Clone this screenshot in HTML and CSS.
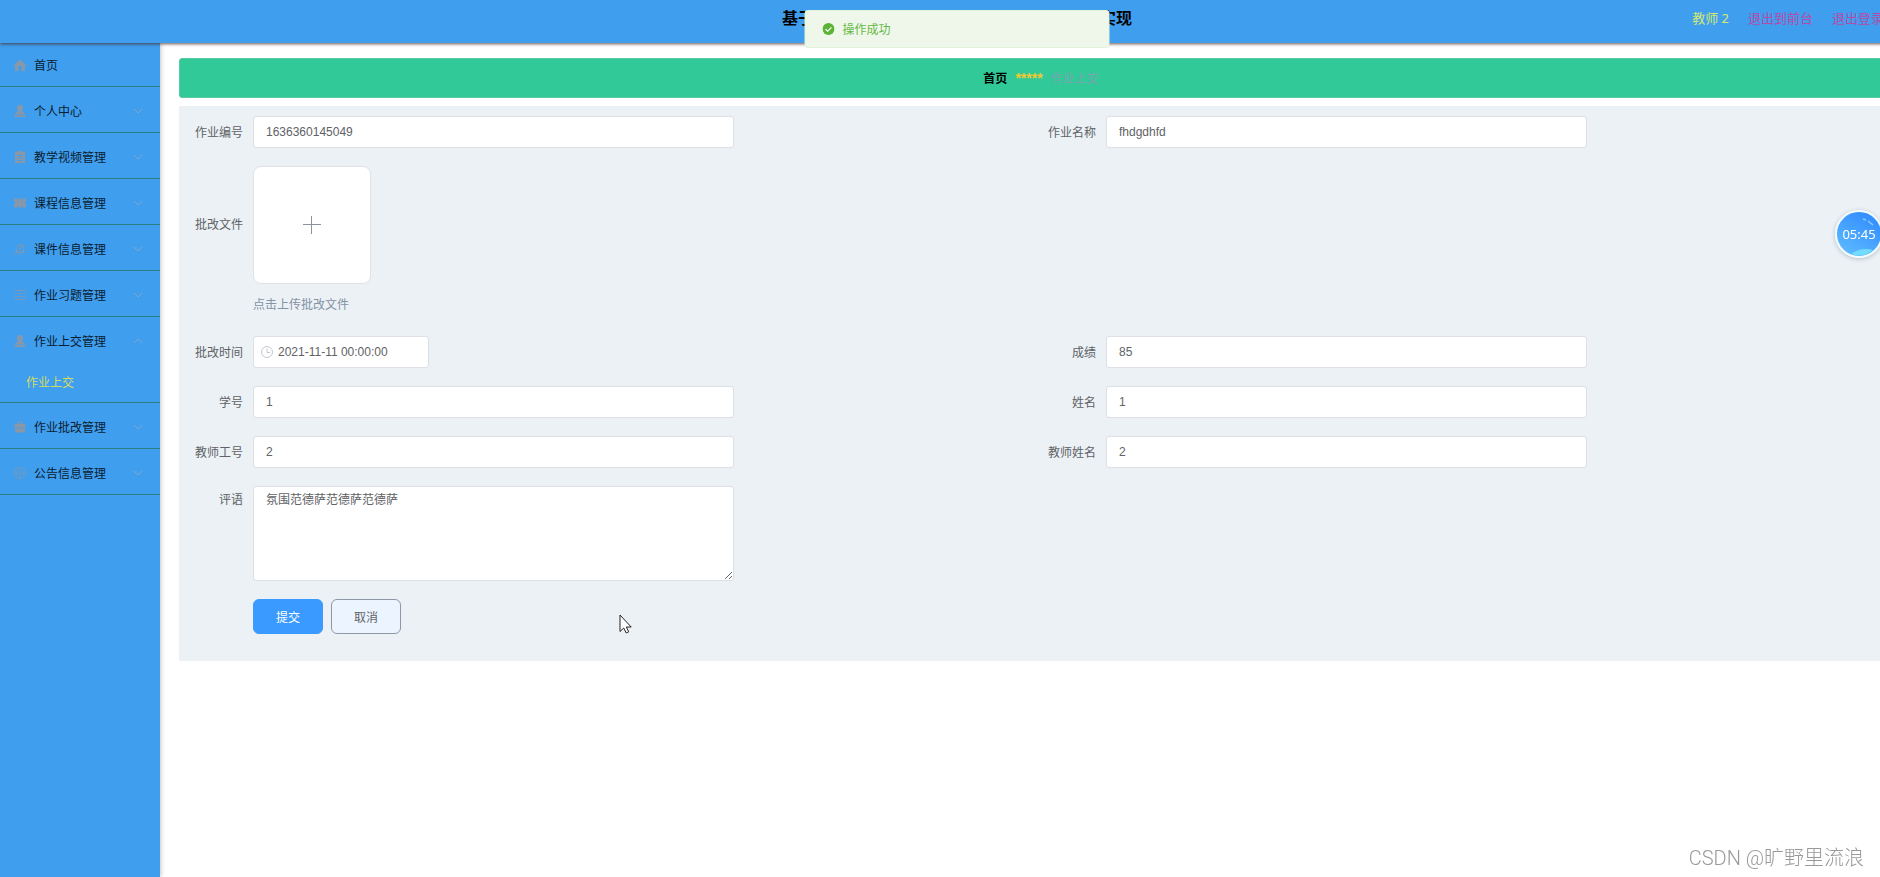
FILE: index.html
```html
<!DOCTYPE html>
<html lang="zh-CN">
<head>
  <meta charset="UTF-8">
  <meta name="viewport" content="width=device-width, initial-scale=1.0">
  <title>作业上交</title>
  <link rel="stylesheet" href="styles.css">
</head>
<body>
  <svg class="symbols" width="0" height="0">
    <symbol id="down" viewBox="0 0 10 6"><path d="M1 1l4 4 4-4" fill="none" stroke="currentColor"/></symbol>
    <symbol id="up" viewBox="0 0 10 6"><path d="M1 5l4-4 4 4" fill="none" stroke="currentColor"/></symbol>
    <symbol id="user" viewBox="0 0 12 12"><path d="M6 0a3 3 0 0 1 3 3c0 1.500-.8 2.600-1.600 3.200C9.500 7 11 8 11.500 9.500H.5C1 8 2.500 7 4.600 6.200 3.800 5.600 3 4.500 3 3a3 3 0 0 1 3-3zM.5 10.300h11V12H.5z"/></symbol>
  </svg>

  <div class="app">
    <header class="header">
      <h1 class="title"><span>基于</span><span>实现</span></h1>
      <div class="account">
        <span class="name">教师 2</span>
        <a href="#">退出到前台</a>
        <a href="#">退出登录</a>
      </div>
    </header>

    <div class="layout">
      <nav class="sidebar">
        <ul class="menu">
          <li>
            <a href="#" class="item home">
              <svg class="icon" viewBox="0 0 12 12"><path d="M6 0.500L0 6l1 .8V12h3.500V7h3v5H11V6.800l1-.8z"/></svg>
              <span>首页</span>
            </a>
          </li>
          <li>
            <a href="#" class="item">
              <svg class="icon"><use href="#user"/></svg>
              <span>个人中心</span>
              <svg class="arrow"><use href="#down"/></svg>
            </a>
          </li>
          <li>
            <a href="#" class="item">
              <svg class="icon" viewBox="0 0 12 12"><path fill-rule="evenodd" d="M1 1h2.500V0h5v1H11v11H1zM3 4v1h6V4zM3 6.500v1h6v-1zM3 9v1h6V9z"/></svg>
              <span>教学视频管理</span>
              <svg class="arrow"><use href="#down"/></svg>
            </a>
          </li>
          <li>
            <a href="#" class="item">
              <svg class="icon" viewBox="0 0 12 12"><path fill-rule="evenodd" d="M0 1.500h12v3a1.500 1.500 0 0 0 0 3v3H0v-3a1.500 1.500 0 0 0 0-3zM3.500 1.500v2h1v-2zM3.500 8.500v2h1v-2zM8 1.500v2h1v-2zM8 8.500v2h1v-2z"/></svg>
              <span>课程信息管理</span>
              <svg class="arrow"><use href="#down"/></svg>
            </a>
          </li>
          <li>
            <a href="#" class="item">
              <svg class="icon line" viewBox="0 0 12 12"><path d="M2.500 9V5.500a3.500 3.500 0 0 1 7 0V9M1 9.500h10M5 11.500h2M6 .5V2M.5 11.500l11-11"/></svg>
              <span>课件信息管理</span>
              <svg class="arrow"><use href="#down"/></svg>
            </a>
          </li>
          <li>
            <a href="#" class="item">
              <svg class="icon line" viewBox="0 0 12 12"><path d="M.5 1.500h11M.5 4.500h2M4 4.500h4M9.500 4.500h2M.5 7.500h6M8 7.500h3.500M.5 10.500h11"/></svg>
              <span>作业习题管理</span>
              <svg class="arrow"><use href="#down"/></svg>
            </a>
          </li>
          <li>
            <a href="#" class="item">
              <svg class="icon"><use href="#user"/></svg>
              <span>作业上交管理</span>
              <svg class="arrow"><use href="#up"/></svg>
            </a>
            <a href="#" class="subitem">作业上交</a>
          </li>
          <li>
            <a href="#" class="item">
              <svg class="icon" viewBox="0 0 12 12"><path d="M.5 3H3.500V.5h5V3h3v3.500H.5zM4.500 1.500V3h3V1.500zM1 7.300h10V11.500H1z" fill-rule="evenodd"/></svg>
              <span>作业批改管理</span>
              <svg class="arrow"><use href="#down"/></svg>
            </a>
          </li>
          <li>
            <a href="#" class="item">
              <svg class="icon line" viewBox="0 0 12 12"><circle cx="6" cy="6" r="5.500"/><path d="M5.500 7.500l2-4M3 8a3.500 3.500 0 0 1 2-5M9 8V5M5 8.500h1.500"/></svg>
              <span>公告信息管理</span>
              <svg class="arrow"><use href="#down"/></svg>
            </a>
          </li>
        </ul>
      </nav>

      <main class="main">
        <div class="breadcrumb">
          <a href="#">首页</a>
          <span class="separator">*****</span>
          <span class="current">作业上交</span>
        </div>

        <form class="form">
          <div class="field">
            <label for="code">作业编号</label>
            <input type="text" id="code" value="1636360145049">
          </div>
          <div class="field">
            <label for="workName">作业名称</label>
            <input type="text" id="workName" value="fhdgdhfd">
          </div>
          <div class="field full upload-field">
            <label for="file">批改文件</label>
            <div>
              <label class="upload" for="file">
                <svg width="20" height="20" viewBox="0 0 20 20"><path d="M1 9.500h18M9.500 1v18" stroke="#8c939d" fill="none"/></svg>
                <input type="file" id="file">
              </label>
              <p class="hint">点击上传批改文件</p>
            </div>
          </div>
          <div class="field">
            <label for="time">批改时间</label>
            <div class="date">
              <svg width="12" height="12" viewBox="0 0 12 12"><circle cx="6" cy="6" r="5.500"/><path d="M6 2.500V6.500h3"/></svg>
              <input type="text" id="time" value="2021-11-11 00:00:00">
            </div>
          </div>
          <div class="field">
            <label for="score">成绩</label>
            <input type="text" id="score" value="85">
          </div>
          <div class="field">
            <label for="studentNo">学号</label>
            <input type="text" id="studentNo" value="1">
          </div>
          <div class="field">
            <label for="studentName">姓名</label>
            <input type="text" id="studentName" value="1">
          </div>
          <div class="field">
            <label for="teacherNo">教师工号</label>
            <input type="text" id="teacherNo" value="2">
          </div>
          <div class="field">
            <label for="teacherName">教师姓名</label>
            <input type="text" id="teacherName" value="2">
          </div>
          <div class="field comment">
            <label for="comment">评语</label>
            <textarea id="comment">氛围范德萨范德萨范德萨</textarea>
          </div>
          <div class="buttons full">
            <button type="button" class="btn primary">提交</button>
            <button type="button" class="btn">取消</button>
          </div>
        </form>
      </main>
    </div>

    <div class="message" role="alert">
      <svg width="12" height="12" viewBox="0 0 12 12"><circle cx="6" cy="6" r="6" fill="#5cb336"/><path d="M3 6.200l2.200 2L9 4.300" stroke="#fff" stroke-width="1.200" fill="none"/></svg>
      <span>操作成功</span>
    </div>
  </div>

  <div class="timer">
    <svg viewBox="0 0 44 44">
      <path d="M14 42c7-5 14-6 22-4a22 22 0 0 1-22 4z" fill="#71dcfc"/>
      <path d="M26 7l3 1M31 9l5 4" stroke="#8ccbff" fill="none" stroke-width="1.500"/>
    </svg>
    <span>05:45</span>
  </div>
  <svg class="cursor" width="13" height="20" viewBox="0 0 13 20"><path d="M1 1v16.500l3.700-3.500 2.500 5 2.500-1.200L7.300 13h4.900z" fill="#fff" stroke="#222"/></svg>
  <div class="watermark">CSDN @旷野里流浪</div>
</body>
</html>
```
FILE: styles.css
```css
* {
  box-sizing: border-box;
}

body {
  margin: 0;
  min-height: 100vh;
  overflow: hidden;
  background: #fff;
  color: #606266;
  font-family: "Noto Sans", "Noto Sans CJK SC", sans-serif;
  font-size: 12px;
}

a {
  color: inherit;
  text-decoration: none;
}

.symbols {
  position: absolute;
}

/* a little wider than the window, the right edge is cut off */
.app {
  position: relative;
  display: flex;
  flex-direction: column;
  width: calc(100% + 34px);
  min-height: 100vh;
}

.header {
  position: relative;
  z-index: 2;
  display: grid;
  grid-template-columns: 1fr 350px 1fr;
  align-items: center;
  height: 43px;
  padding: 0 30px 8px;
  background: #409eee;
  box-shadow: 0 1px 3px rgba(70, 40, 30, 0.8);
}

.title {
  grid-column: 2;
  display: flex;
  justify-content: space-between;
  margin: 0;
  color: #000;
  font-size: 16px;
  line-height: 24px;
}

.account {
  display: flex;
  justify-content: flex-end;
  gap: 19px;
  color: #b44ba8;
  font-size: 13px;
  line-height: 20px;
}

.account .name {
  color: #d5ea6e;
}

.layout {
  display: flex;
  flex: 1;
}

.sidebar {
  width: 160px;
  background: #409eee;
  box-shadow: 1px 0 4px rgba(80, 60, 80, 0.3);
}

.menu {
  margin: 0;
  padding: 0;
  list-style: none;
}

.menu li {
  border-bottom: 1px solid #2d7f86;
}

.item {
  display: flex;
  align-items: center;
  height: 45px;
  padding: 2px 17px 0 14px;
  color: #0b1c30;
}

.item.home {
  height: 43px;
  padding-top: 0;
}

.icon {
  width: 12px;
  height: 12px;
  margin-right: 8px;
  fill: #8a97a6;
}

.icon.line {
  fill: none;
  stroke: #7f98b0;
}

.arrow {
  width: 10px;
  height: 6px;
  margin-left: auto;
  color: #80a6c8;
}

.subitem {
  display: block;
  height: 40px;
  padding-left: 26px;
  color: #d2dc62;
  line-height: 42px;
}

.main {
  flex: 1;
  padding: 15px 11px 0 19px;
}

.breadcrumb {
  display: flex;
  justify-content: center;
  align-items: center;
  gap: 8px;
  height: 40px;
  margin-bottom: 8px;
  border: 1px solid #55c9a0;
  border-radius: 3px;
  background: #32c998;
}

.breadcrumb a {
  color: #000;
  font-weight: bold;
}

.separator {
  color: #f1c830;
  font-family: "Liberation Sans", sans-serif;
  font-size: 14px;
  font-weight: bold;
}

.current {
  color: #78a5b0;
}

.form {
  display: grid;
  grid-template-columns: 1fr 1fr;
  row-gap: 18px;
  padding: 10px 18px 27px 0;
  background: #ebf1f5;
}

.full {
  grid-column: 1 / -1;
}

.field {
  display: flex;
  align-items: center;
  gap: 10px;
}

.field > label {
  flex: 0 0 64px;
  height: 32px;
  line-height: 34px;
  text-align: right;
}

input,
textarea {
  height: 32px;
  padding: 0 12px;
  border: 1px solid #dcdfe6;
  border-radius: 3px;
  background: #fff;
  color: #606266;
  font-family: "Liberation Sans", "Noto Sans CJK SC", sans-serif;
  font-size: 12px;
}

.field > input,
textarea {
  width: calc(62% - 48px);
}

.upload-field {
  align-items: flex-start;
}

.upload-field > label {
  line-height: 118px;
}

.upload {
  display: flex;
  justify-content: center;
  align-items: center;
  width: 118px;
  height: 118px;
  border: 1px solid #dfe3e8;
  border-radius: 8px;
  background: #fff;
  cursor: pointer;
}

.upload input {
  display: none;
}

.hint {
  height: 34px;
  margin: 0;
  color: #8492a6;
  line-height: 42px;
}

.date {
  position: relative;
  width: 176px;
}

.date input {
  width: 100%;
  padding-left: 24px;
}

.date svg {
  position: absolute;
  top: 10px;
  left: 8px;
  fill: none;
  stroke: #c3c7cf;
}

.comment {
  align-items: flex-start;
}

.comment > label {
  line-height: 28px;
}

textarea {
  display: block;
  height: 95px;
  padding: 4px 12px;
  line-height: 18px;
  resize: vertical;
}

.buttons {
  display: flex;
  gap: 8px;
  padding-left: 74px;
}

.btn {
  width: 70px;
  height: 35px;
  padding: 0;
  border: 1px solid #8e97a6;
  border-radius: 6px;
  background: #ecf5ff;
  color: #606266;
  font-family: inherit;
  font-size: 12px;
  cursor: pointer;
}

.btn.primary {
  border-color: #3a9aff;
  background: #3a9aff;
  color: #fff;
}

.message {
  position: absolute;
  z-index: 3;
  top: 10px;
  left: 50%;
  display: flex;
  align-items: center;
  gap: 8px;
  width: 305px;
  height: 38px;
  padding: 0 17px;
  transform: translateX(-50%);
  border: 1px solid #e1f3d8;
  border-radius: 3px;
  background: #eef7ea;
  color: #67b745;
}

.timer {
  position: fixed;
  z-index: 4;
  top: 210px;
  right: -3px;
  display: flex;
  justify-content: center;
  align-items: center;
  width: 48px;
  height: 48px;
  border: 2px solid #f2fbff;
  border-radius: 50%;
  background: linear-gradient(210deg, #2b86ff, #62bfff);
  box-shadow: 0 1px 4px rgba(60, 80, 100, 0.3);
  color: #fff;
  font-size: 13px;
}

.timer svg {
  position: absolute;
  width: 44px;
  height: 44px;
}

.timer span {
  position: relative;
}

.cursor {
  position: fixed;
  top: 614px;
  left: 619px;
}

.watermark {
  position: fixed;
  right: 16px;
  bottom: 4px;
  color: #999;
  font-family: Roboto, "Noto Sans CJK SC", sans-serif;
  font-size: 20px;
  font-weight: 300;
  line-height: 30px;
}
```
